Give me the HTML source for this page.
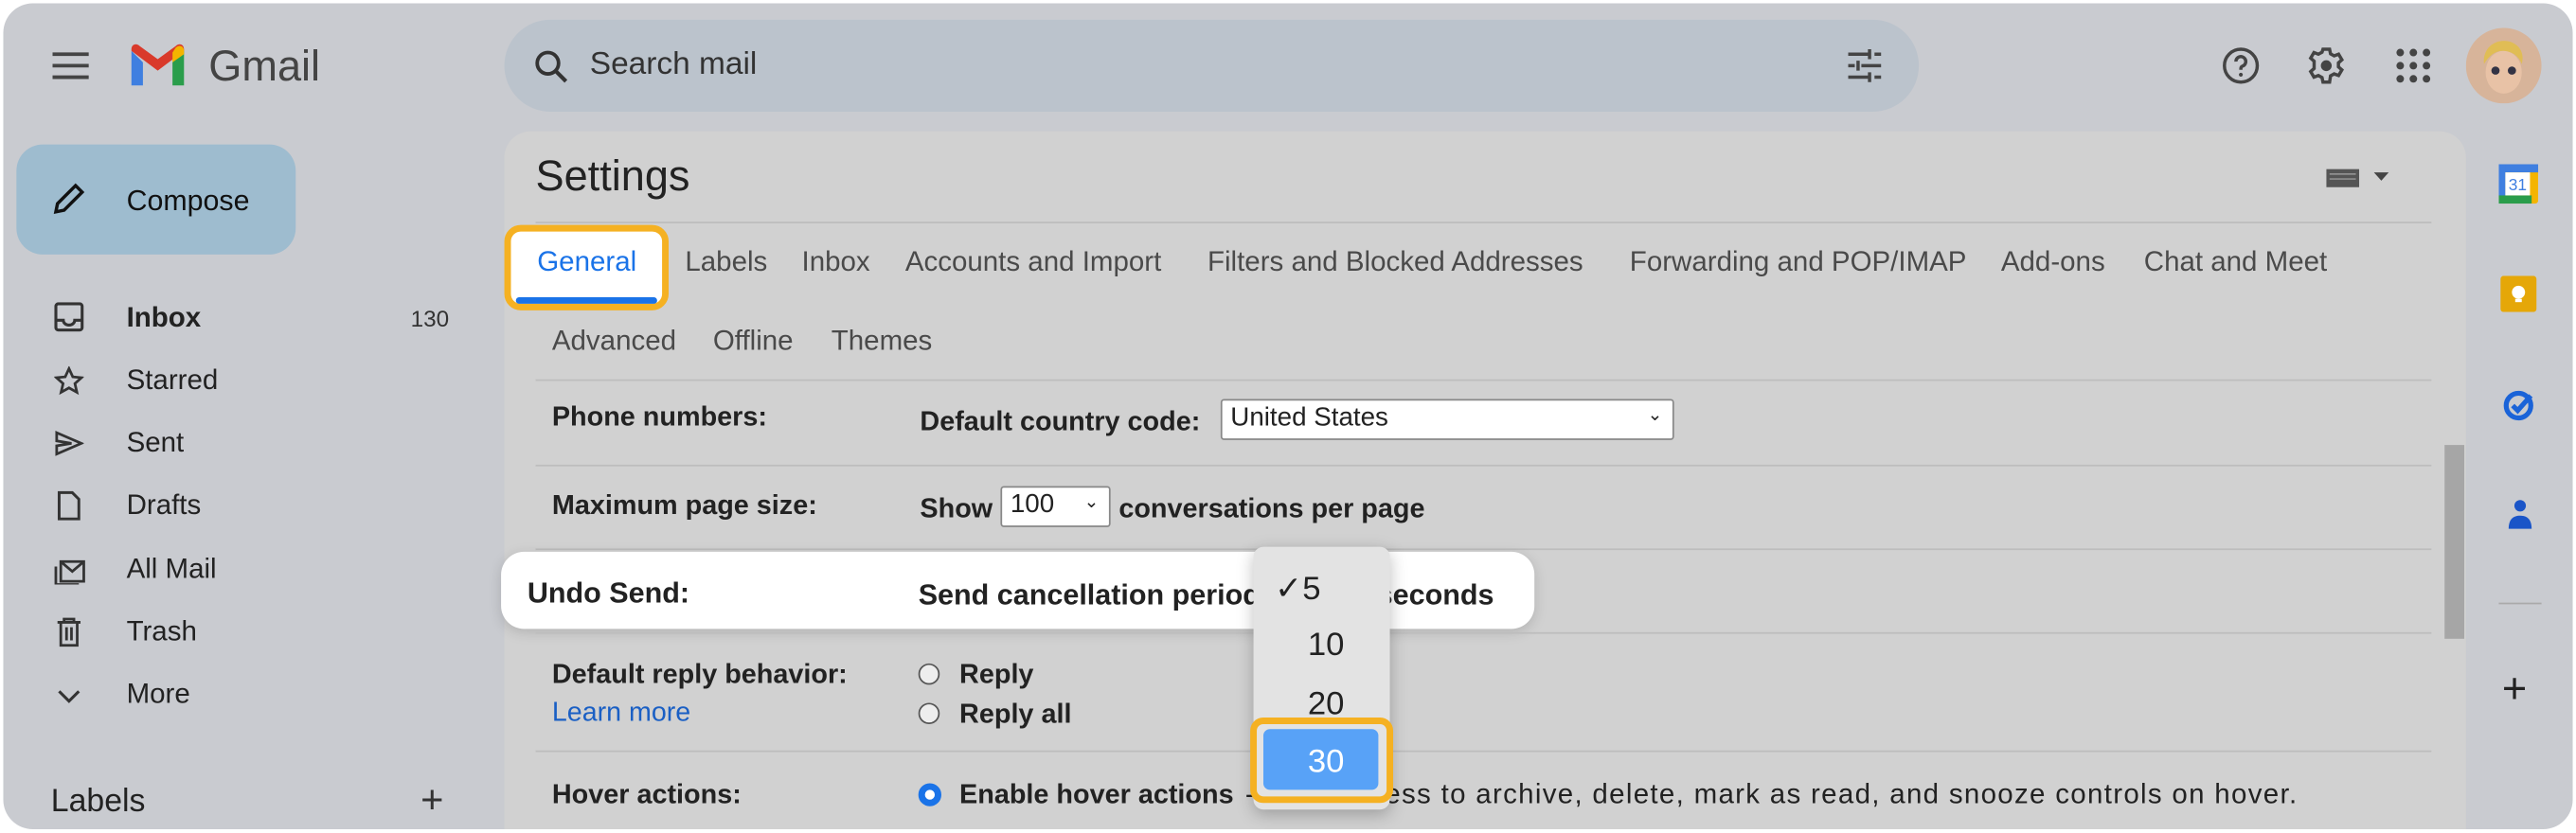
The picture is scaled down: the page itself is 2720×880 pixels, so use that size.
<!DOCTYPE html>
<html><head><meta charset="utf-8"><style>
*{margin:0;padding:0;box-sizing:border-box}
html,body{width:2720px;height:880px;overflow:hidden;background:#fff}
#w{position:absolute;left:0;top:0;width:1568px;height:507px;transform:scale(1.73469);transform-origin:0 0;font-family:"Liberation Sans",Arial,sans-serif;color:#222}
.a{position:absolute;white-space:nowrap}
#frame{left:2px;top:2px;width:1564px;height:503px;border-radius:18px;background:#c9cbd0;overflow:hidden}
.nav{font-size:17px;color:#222;left:77px}
.ic{left:33px}
.tab{font-size:17px;color:#4a4a4a;top:150px}
.b{font-weight:bold;font-size:16.6px;color:#222}
.hr{position:absolute;height:1px;background:#bdbdbd;left:326px;width:1154px}
.sel{background:#fff;border:1px solid #888;border-radius:2px;font-size:16px;padding:2px 5px}
</style></head><body><div id="w">
<div class="a" id="frame">
 <div class="a" style="left:305px;top:78px;width:1194px;height:440px;background:#d1d1d1;border-radius:16px 16px 0 0"></div>
</div>
<svg class="a" style="left:31px;top:30px" width="24" height="20"><path d="M1 3h22M1 10h22M1 17h22" stroke="#444" stroke-width="2.2"/></svg>
<svg class="a" style="left:78px;top:26px" width="36" height="28" viewBox="0 0 36 28"><path d="M2 5v21h7V12z" fill="#3f7fe0"/><path d="M27 12v14h7V5z" fill="#2a9d4b"/><path d="M2 5l16 12 16-12v-1c0-3-3-4-5-2L18 10 7 2C5 0 2 1 2 4z" fill="#d93a2b"/><path d="M27 6v6l7-5V5c0-3-3-4-5-2z" fill="#f4b400"/></svg>
<div class="a" style="left:127px;top:25px;font-size:26px;color:#444">Gmail</div>
<div class="a" style="left:307px;top:12px;width:861px;height:56px;border-radius:28px;background:#bbc3cc"></div>
<svg class="a" style="left:324px;top:29px" width="24" height="24"><circle cx="9.5" cy="9.5" r="6.5" stroke="#333" stroke-width="2.2" fill="none"/><path d="M14.5 14.5l6 6" stroke="#333" stroke-width="2.4"/></svg>
<div class="a" style="left:359px;top:29px;font-size:19.3px;color:#333">Search mail</div>
<svg class="a" style="left:1123px;top:28px" width="24" height="24"><path d="M2 5h12M18 5h4M2 12h4M10 12h12M2 19h12M18 19h4M15 2v6M8 9v6M15 16v6" stroke="#444" stroke-width="2"/></svg>
<svg class="a" style="left:1352px;top:28px" width="24" height="24"><circle cx="12" cy="12" r="10" stroke="#444" stroke-width="2" fill="none"/><path d="M9 9.5a3 3 0 1 1 4 2.8c-1 .4-1 1-1 2.2" stroke="#444" stroke-width="2" fill="none"/><circle cx="12" cy="17.5" r="1.2" fill="#444"/></svg>
<svg class="a" style="left:1404px;top:28px" width="24" height="24" viewBox="0 0 24 24"><path d="M10 2h4l.6 2.8 2.2 1.2 2.7-1 2 3.4-2.1 1.9v2.4l2.1 1.9-2 3.4-2.7-1-2.2 1.2L14 22h-4l-.6-2.8-2.2-1.2-2.7 1-2-3.4 2.1-1.9V9.3L2.5 7.4l2-3.4 2.7 1 2.2-1.2z" stroke="#444" stroke-width="2" fill="none"/><circle cx="12" cy="12" r="3.3" fill="#444"/></svg>
<svg class="a" style="left:1458px;top:29px" width="22" height="22"><g fill="#444"><circle cx="3" cy="3" r="2.3"/><circle cx="11" cy="3" r="2.3"/><circle cx="19" cy="3" r="2.3"/><circle cx="3" cy="11" r="2.3"/><circle cx="11" cy="11" r="2.3"/><circle cx="19" cy="11" r="2.3"/><circle cx="3" cy="19" r="2.3"/><circle cx="11" cy="19" r="2.3"/><circle cx="19" cy="19" r="2.3"/></g></svg>
<svg class="a" style="left:1501px;top:17px" width="46" height="46"><circle cx="23" cy="23" r="23" fill="#d7b49a"/><ellipse cx="23" cy="27" rx="11" ry="13" fill="#e8c2a6"/><path d="M11 22c-1-11 8-15 14-14 7 1 11 7 9 14-2-5-6-8-12-8-4 0-8 3-11 8z" fill="#e0bd55"/><circle cx="18" cy="26" r="2.5" fill="#334"/><circle cx="28" cy="26" r="2.5" fill="#334"/></svg>
<div class="a" style="left:10px;top:88px;width:170px;height:67px;border-radius:16px;background:#9ebccf"></div>
<svg class="a" style="left:31px;top:110px" width="22" height="22"><path d="M3 19l1-5L15 3l4 4L8 18z" stroke="#111" stroke-width="2" fill="none"/></svg>
<div class="a" style="left:77px;top:112px;font-size:17.5px;color:#111">Compose</div>
<svg class="a ic" style="top:184px" width="18" height="18"><rect x="1" y="1" width="16" height="16" rx="1.5" stroke="#333" stroke-width="1.8" fill="none"/><path d="M1 11h4.5a3.5 3 0 0 0 7 0H17" stroke="#333" stroke-width="1.8" fill="none"/></svg>
<div class="a nav" style="top:184px;font-weight:bold">Inbox</div>
<div class="a" style="left:250px;top:186px;font-size:14px;color:#333">130</div>
<svg class="a ic" style="top:223px" width="18" height="18"><path d="M9 1.5l2.3 5 5.3.5-4 3.6 1.2 5.3L9 13.2 4.2 15.9l1.2-5.3-4-3.6 5.3-.5z" stroke="#333" stroke-width="1.6" fill="none"/></svg>
<div class="a nav" style="top:222px">Starred</div>
<svg class="a ic" style="top:261px" width="18" height="18"><path d="M1.5 2.5l15 6.5-15 6.5v-5l9-1.5-9-1.5z" stroke="#333" stroke-width="1.6" fill="none"/></svg>
<div class="a nav" style="top:260px">Sent</div>
<svg class="a ic" style="top:299px" width="18" height="18"><path d="M3 1h8l4 4v12H3z" stroke="#333" stroke-width="1.7" fill="none"/></svg>
<div class="a nav" style="top:298px">Drafts</div>
<svg class="a ic" style="top:338px" width="20" height="18"><path d="M4 4h14v12H4z M1 7v11h14" stroke="#333" stroke-width="1.6" fill="none"/><path d="M4 4l7 6 7-6" stroke="#333" stroke-width="1.6" fill="none"/></svg>
<div class="a nav" style="top:337px">All Mail</div>
<svg class="a ic" style="top:376px" width="18" height="18"><path d="M2 3h14M6 3V1h6v2M4 3v14h10V3M7.5 6v8M10.5 6v8" stroke="#333" stroke-width="1.6" fill="none"/></svg>
<div class="a nav" style="top:375px">Trash</div>
<svg class="a ic" style="top:417px" width="18" height="14"><path d="M3 4l6 6 6-6" stroke="#333" stroke-width="1.8" fill="none"/></svg>
<div class="a nav" style="top:413px">More</div>
<div class="a" style="left:31px;top:477px;font-size:19.5px;color:#222">Labels</div>
<div class="a" style="left:256px;top:474px;font-size:24px;color:#333">+</div>
<div class="a" style="left:326px;top:92px;font-size:26px;color:#222">Settings</div>
<svg class="a" style="left:1416px;top:101px" width="42" height="14"><rect x="0" y="2" width="20" height="11" fill="#555"/><path d="M2 5h16M2 8h16" stroke="#999" stroke-width=".8"/><path d="M29 4h9l-4.5 5z" fill="#444"/></svg>
<div class="hr" style="top:135px"></div>
<div class="a" style="left:307px;top:137px;width:100px;height:52px;background:#fff;border:4px solid #f5b122;border-radius:10px"></div>
<div class="a" style="left:314px;top:181px;width:86px;height:4px;background:#1a73e8;border-radius:2px"></div>
<div class="a tab" style="left:327px;color:#1a73e8">General</div>
<div class="a tab" style="left:417px">Labels</div>
<div class="a tab" style="left:488px">Inbox</div>
<div class="a tab" style="left:551px">Accounts and Import</div>
<div class="a tab" style="left:735px">Filters and Blocked Addresses</div>
<div class="a tab" style="left:992px">Forwarding and POP/IMAP</div>
<div class="a tab" style="left:1218px">Add-ons</div>
<div class="a tab" style="left:1305px">Chat and Meet</div>
<div class="a tab" style="left:336px;top:198px">Advanced</div>
<div class="a tab" style="left:434px;top:198px">Offline</div>
<div class="a tab" style="left:506px;top:198px">Themes</div>
<div class="hr" style="top:231px"></div>
<div class="a b" style="left:336px;top:244px">Phone numbers:</div>
<div class="a b" style="left:560px;top:247px">Default country code:</div>
<div class="a sel" style="left:743px;top:243px;width:276px;height:25px">United States<span style="position:absolute;right:6px;top:2px;font-size:11px">&#8964;</span></div>
<div class="hr" style="top:283px"></div>
<div class="a b" style="left:336px;top:298px">Maximum page size:</div>
<div class="a b" style="left:560px;top:300px">Show</div>
<div class="a sel" style="left:609px;top:296px;width:67px;height:25px">100<span style="position:absolute;right:6px;top:2px;font-size:11px">&#8964;</span></div>
<div class="a b" style="left:681px;top:300px">conversations per page</div>
<div class="hr" style="top:334px"></div>
<div class="a" style="left:305px;top:336px;width:629px;height:47px;background:#fff;border-radius:14px;box-shadow:0 2px 8px rgba(0,0,0,.15)"></div>
<div class="a b" style="left:321px;top:351px;font-size:17.6px">Undo Send:</div>
<div class="a b" style="left:559px;top:352px;font-size:17.6px">Send cancellation period: 5</div>
<div class="a b" style="left:838px;top:352px;font-size:17.6px">seconds</div>
<div class="hr" style="top:385px"></div>
<div class="a b" style="left:336px;top:401px">Default reply behavior:</div>
<div class="a" style="left:336px;top:425px;font-size:16.5px;color:#1a5fc4">Learn more</div>
<div class="a" style="left:559px;top:404px;width:13px;height:13px;border:1px solid #555;border-radius:50%;background:#eee"></div>
<div class="a b" style="left:584px;top:401px">Reply</div>
<div class="a" style="left:559px;top:428px;width:13px;height:13px;border:1px solid #555;border-radius:50%;background:#eee"></div>
<div class="a b" style="left:584px;top:425px">Reply all</div>
<div class="hr" style="top:457px"></div>
<div class="a b" style="left:336px;top:474px">Hover actions:</div>
<div class="a" style="left:559px;top:477px;width:14px;height:14px;border:4px solid #1a73e8;border-radius:50%;background:#fff"></div>
<div class="a b" style="left:584px;top:474px">Enable hover actions</div>
<div class="a" style="left:758px;top:474px;font-size:17px;color:#222;letter-spacing:.75px"> - Gain access to archive, delete, mark as read, and snooze controls on hover.</div>
<div class="a" style="left:763px;top:333px;width:83px;height:160px;background:#e3e3e3;border-radius:6px;box-shadow:0 3px 10px rgba(0,0,0,.25)"></div>
<div class="a" style="left:776px;top:346px;font-size:20px;color:#222">&#10003;5</div>
<div class="a" style="left:796px;top:382px;font-size:20px;color:#222">10</div>
<div class="a" style="left:796px;top:418px;font-size:20px;color:#222">20</div>
<div class="a" style="left:761px;top:437px;width:87px;height:52px;border:4px solid #f5b122;border-radius:8px;background:#e3e3e3"></div>
<div class="a" style="left:769px;top:444px;width:70px;height:37px;background:#58a2f7;border-radius:4px"></div>
<div class="a" style="left:796px;top:453px;font-size:20px;color:#fff">30</div>
<div class="a" style="left:1488px;top:271px;width:12px;height:118px;background:#a6a6a6"></div>
<svg class="a" style="left:1521px;top:100px" width="24" height="24"><rect x="0" y="0" width="24" height="24" rx="2" fill="#f4b400"/><rect x="0" y="0" width="24" height="5" fill="#3f7fe0"/><rect x="0" y="0" width="4" height="24" fill="#3f7fe0"/><rect x="0" y="19" width="20" height="5" fill="#2a9d4b"/><rect x="4" y="5" width="15" height="14" fill="#fff"/><text x="11.5" y="16" font-size="10" text-anchor="middle" fill="#3f7fe0" font-family="Liberation Sans">31</text></svg>
<svg class="a" style="left:1522px;top:168px" width="22" height="22"><rect width="22" height="22" rx="2" fill="#e5a708"/><circle cx="11" cy="10" r="4" fill="#fff"/><rect x="9" y="14" width="4" height="2" fill="#fff"/></svg>
<svg class="a" style="left:1523px;top:235px" width="22" height="22"><circle cx="10" cy="12" r="7.5" stroke="#1a63d8" stroke-width="3" fill="none"/><path d="M6.5 12l3 3 8-9" stroke="#1a63d8" stroke-width="3" fill="none"/></svg>
<svg class="a" style="left:1525px;top:302px" width="18" height="22"><circle cx="9" cy="6" r="3.5" fill="#1a55c8"/><path d="M2 20c0-6 3-8 7-8s7 2 7 8z" fill="#1a55c8"/></svg>
<div class="a" style="left:1521px;top:367px;width:26px;height:1px;background:#aaa"></div>
<div class="a" style="left:1523px;top:404px;font-size:26px;color:#222">+</div>
</div></body></html>
